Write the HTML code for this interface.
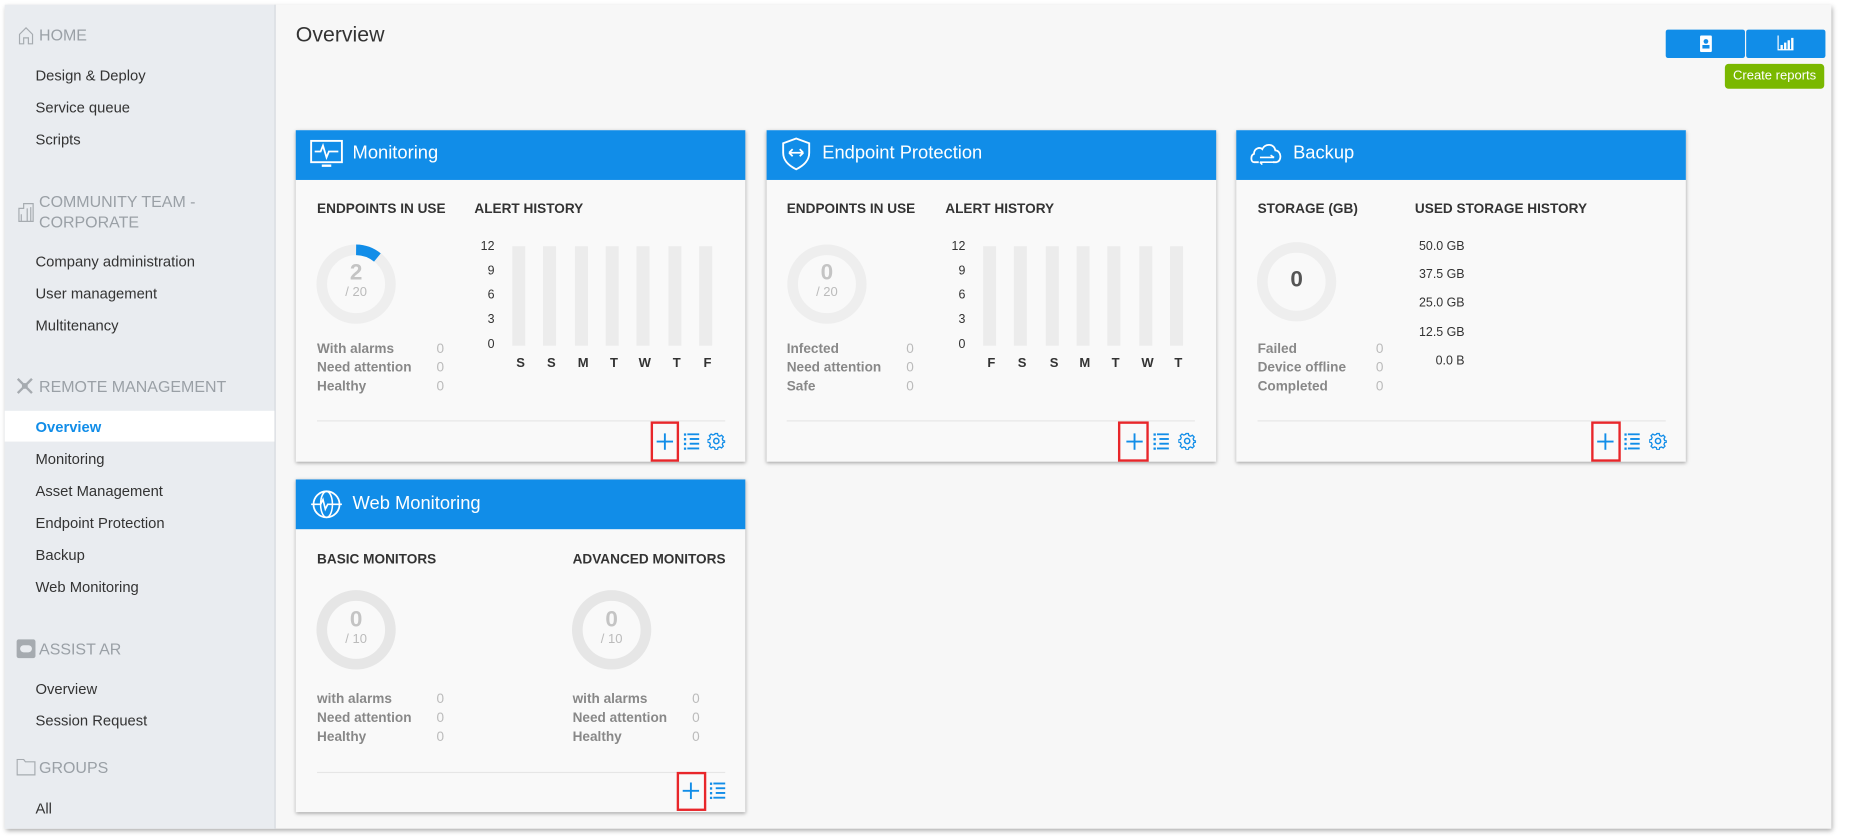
<!DOCTYPE html>
<html><head><meta charset="utf-8">
<style>
html,body{margin:0;padding:0;width:1855px;height:837px;overflow:hidden;background:#fff;font-family:"Liberation Sans",sans-serif;}
#s{position:absolute;left:0;top:0;width:1568px;height:707px;transform:scale(1.18304,1.18388);transform-origin:0 0;}
.a{position:absolute;white-space:nowrap;}
#frame{left:4px;top:4px;width:1544px;height:696px;background:#f7f7f7;box-shadow:1px 2px 4px rgba(0,0,0,.35);}
#side{left:4px;top:4px;width:228px;height:696px;background:#e9ecf0;border-right:1px solid #d6d9dd;}
.sh{font-size:13.5px;color:#9aa0a6;}
.si{font-size:12.5px;color:#333;left:30px;}
.card{background:#f9f9f9;box-shadow:0 1px 3px rgba(0,0,0,.35);}
.hd{background:#118de8;color:#fff;font-size:15.5px;}
.lab{font-size:11.5px;font-weight:bold;color:#333;}
.st{font-size:11.5px;font-weight:bold;color:#888;}
.sv{font-size:11.5px;color:#bbb;}
.yl{font-size:10.5px;color:#333;text-align:right;width:30px;}
.bar{background:#ececec;width:11px;height:84px;top:208px;}
.day{font-size:11px;font-weight:bold;color:#333;width:14px;text-align:center;top:301px;}
.div{height:1px;background:#e6e6e6;}
.red{border:2px solid #e8262a;box-sizing:border-box;}
</style></head><body><div id="s">
<div class="a" id="frame"></div>
<div class="a" id="side"></div>

<!-- sidebar -->
<svg class="a" style="left:15px;top:22px" width="14" height="16" viewBox="0 0 14 16"><path d="M1.5 15V7L7 1.5 12.5 7V15H9V10H5V15Z" fill="none" stroke="#a6abb0" stroke-width="1"/></svg>
<div class="a sh" style="left:33px;top:22px">HOME</div>
<div class="a si" style="top:57px">Design &amp; Deploy</div>
<div class="a si" style="top:84px">Service queue</div>
<div class="a si" style="top:111px">Scripts</div>
<svg class="a" style="left:15px;top:170px" width="14" height="18" viewBox="0 0 14 18"><path d="M1 17V6H5V2H13V17ZM3 17V11M8 6V17M11 5V17" fill="none" stroke="#a6abb0" stroke-width="1"/></svg>
<div class="a sh" style="left:33px;top:162px;line-height:17px">COMMUNITY TEAM -<br>CORPORATE</div>
<div class="a si" style="top:214px">Company administration</div>
<div class="a si" style="top:241px">User management</div>
<div class="a si" style="top:268px">Multitenancy</div>
<svg class="a" style="left:13px;top:318px" width="16" height="16" viewBox="0 0 16 16"><path d="M2 2L14 14M14 2L2 14" stroke="#a6abb0" stroke-width="2"/><circle cx="8" cy="8" r="2.5" fill="#a6abb0"/></svg>
<div class="a sh" style="left:33px;top:319px">REMOTE MANAGEMENT</div>
<div class="a" style="left:4px;top:347px;width:228px;height:26px;background:#fff"></div>
<div class="a si" style="top:354px;color:#118de8;font-weight:bold">Overview</div>
<div class="a si" style="top:381px">Monitoring</div>
<div class="a si" style="top:408px">Asset Management</div>
<div class="a si" style="top:435px">Endpoint Protection</div>
<div class="a si" style="top:462px">Backup</div>
<div class="a si" style="top:489px">Web Monitoring</div>
<svg class="a" style="left:14px;top:540px" width="16" height="16" viewBox="0 0 16 16"><rect x="0" y="0" width="16" height="16" rx="2" fill="#a6abb0"/><rect x="3" y="5" width="10" height="6" rx="3" fill="#e9ecf0"/></svg>
<div class="a sh" style="left:33px;top:541px">ASSIST AR</div>
<div class="a si" style="top:575px">Overview</div>
<div class="a si" style="top:602px">Session Request</div>
<svg class="a" style="left:14px;top:641px" width="16" height="14" viewBox="0 0 16 14"><path d="M.5 13.5V.5H6L7.5 2.5H15.5V13.5Z" fill="none" stroke="#a6abb0"/></svg>
<div class="a sh" style="left:33px;top:641px">GROUPS</div>
<div class="a si" style="top:676px">All</div>

<!-- header -->
<div class="a" style="left:250px;top:19px;font-size:18px;color:#333">Overview</div>
<div class="a" style="left:1408px;top:25px;width:67px;height:24px;background:#118de8;border-radius:2px"></div>
<div class="a" style="left:1476px;top:25px;width:67px;height:24px;background:#118de8;border-radius:2px"></div>
<svg class="a" style="left:1436px;top:30px" width="12" height="14" viewBox="0 0 12 14"><rect x="1" y="0" width="10" height="14" rx="1" fill="#fff"/><circle cx="6" cy="5" r="2" fill="#118de8"/><rect x="3" y="8" width="6" height="3" fill="#118de8"/></svg>
<svg class="a" style="left:1502px;top:30px" width="14" height="13" viewBox="0 0 14 13"><path d="M1 0V12H14" stroke="#fff" fill="none"/><rect x="3" y="8" width="2" height="4" fill="#fff"/><rect x="6" y="6" width="2" height="6" fill="#fff"/><rect x="9" y="4" width="2" height="8" fill="#fff"/><rect x="12" y="2" width="2" height="10" fill="#fff"/></svg>
<div class="a" style="left:1505px;top:50px;width:0;height:0;border:4px solid transparent;border-bottom-color:#7ab800"></div>
<div class="a" style="left:1458px;top:54px;width:84px;height:21px;background:#7ab800;border-radius:3px;color:#fff;font-size:11px;text-align:center;line-height:21px">Create reports</div>

<!-- Monitoring card -->
<div class="a card" style="left:250px;top:110px;width:380px;height:280px"></div>
<div class="a hd" style="left:250px;top:110px;width:380px;height:42px"></div>
<svg class="a" style="left:262px;top:117px" width="28" height="26" viewBox="0 0 28 26"><rect x="1" y="2" width="26" height="18" fill="none" stroke="#fff" stroke-width="1.6"/><path d="M4 11H9L11 6 14 16 16 11H24" fill="none" stroke="#fff" stroke-width="1.5"/><path d="M10 23H18" stroke="#fff" stroke-width="2"/></svg>
<div class="a hd" style="left:298px;top:121px;background:none">Monitoring</div>
<div class="a lab" style="left:268px;top:171px">ENDPOINTS IN USE</div>
<div class="a lab" style="left:401px;top:171px">ALERT HISTORY</div>
<svg class="a" style="left:264px;top:203px" width="74" height="74" viewBox="0 0 74 74"><circle cx="37" cy="37" r="29" fill="none" stroke="#eeeeee" stroke-width="9"/><path d="M37 8A29 29 0 0 1 55 14.5" fill="none" stroke="#118de8" stroke-width="9"/></svg>
<div class="a" style="left:280px;top:220px;width:42px;text-align:center;font-size:19px;font-weight:bold;color:#c4c4c4">2</div>
<div class="a" style="left:280px;top:241px;width:42px;text-align:center;font-size:11px;color:#bbb">/ 20</div>
<div class="a st" style="left:268px;top:289px">With alarms</div><div class="a sv" style="left:369px;top:289px">0</div>
<div class="a st" style="left:268px;top:305px">Need attention</div><div class="a sv" style="left:369px;top:305px">0</div>
<div class="a st" style="left:268px;top:321px">Healthy</div><div class="a sv" style="left:369px;top:321px">0</div>
<div class="a yl" style="left:388px;top:202px">12</div><div class="a yl" style="left:388px;top:223px">9</div><div class="a yl" style="left:388px;top:243px">6</div><div class="a yl" style="left:388px;top:264px">3</div><div class="a yl" style="left:388px;top:285px">0</div>
<div class="a bar" style="left:433px"></div><div class="a bar" style="left:459px"></div><div class="a bar" style="left:486px"></div><div class="a bar" style="left:512px"></div><div class="a bar" style="left:538px"></div><div class="a bar" style="left:565px"></div><div class="a bar" style="left:591px"></div>
<div class="a day" style="left:433px">S</div><div class="a day" style="left:459px">S</div><div class="a day" style="left:486px">M</div><div class="a day" style="left:512px">T</div><div class="a day" style="left:538px">W</div><div class="a day" style="left:565px">T</div><div class="a day" style="left:591px">F</div>
<div class="a div" style="left:268px;top:355px;width:345px"></div>

<!-- Endpoint card -->
<div class="a card" style="left:648px;top:110px;width:380px;height:280px"></div>
<div class="a hd" style="left:648px;top:110px;width:380px;height:42px"></div>
<svg class="a" style="left:660px;top:116px" width="26" height="28" viewBox="0 0 26 28"><path d="M13 1L24 5V13C24 20 19 24 13 27 7 24 2 20 2 13V5Z" fill="none" stroke="#fff" stroke-width="1.6"/><path d="M7 13H19M7 13L10 10M7 13L10 16M19 13L16 10M19 13L16 16" stroke="#fff" stroke-width="1.5" fill="none"/></svg>
<div class="a hd" style="left:695px;top:121px;background:none">Endpoint Protection</div>
<div class="a lab" style="left:665px;top:171px">ENDPOINTS IN USE</div>
<div class="a lab" style="left:799px;top:171px">ALERT HISTORY</div>
<svg class="a" style="left:662px;top:203px" width="74" height="74" viewBox="0 0 74 74"><circle cx="37" cy="37" r="29" fill="none" stroke="#eeeeee" stroke-width="9"/></svg>
<div class="a" style="left:678px;top:220px;width:42px;text-align:center;font-size:19px;font-weight:bold;color:#c4c4c4">0</div>
<div class="a" style="left:678px;top:241px;width:42px;text-align:center;font-size:11px;color:#bbb">/ 20</div>
<div class="a st" style="left:665px;top:289px">Infected</div><div class="a sv" style="left:766px;top:289px">0</div>
<div class="a st" style="left:665px;top:305px">Need attention</div><div class="a sv" style="left:766px;top:305px">0</div>
<div class="a st" style="left:665px;top:321px">Safe</div><div class="a sv" style="left:766px;top:321px">0</div>
<div class="a yl" style="left:786px;top:202px">12</div><div class="a yl" style="left:786px;top:223px">9</div><div class="a yl" style="left:786px;top:243px">6</div><div class="a yl" style="left:786px;top:264px">3</div><div class="a yl" style="left:786px;top:285px">0</div>
<div class="a bar" style="left:831px"></div><div class="a bar" style="left:857px"></div><div class="a bar" style="left:884px"></div><div class="a bar" style="left:910px"></div><div class="a bar" style="left:936px"></div><div class="a bar" style="left:963px"></div><div class="a bar" style="left:989px"></div>
<div class="a day" style="left:831px">F</div><div class="a day" style="left:857px">S</div><div class="a day" style="left:884px">S</div><div class="a day" style="left:910px">M</div><div class="a day" style="left:936px">T</div><div class="a day" style="left:963px">W</div><div class="a day" style="left:989px">T</div>
<div class="a div" style="left:665px;top:355px;width:345px"></div>

<!-- Backup card -->
<div class="a card" style="left:1045px;top:110px;width:380px;height:280px"></div>
<div class="a hd" style="left:1045px;top:110px;width:380px;height:42px"></div>
<svg class="a" style="left:1056px;top:119px" width="30" height="22" viewBox="0 0 30 22"><path d="M8 18H4C1 18 1 12 4 11 4 6 9 5 11 7 13 2 21 2 22 8 27 8 28 17 23 18H20" fill="none" stroke="#fff" stroke-width="1.5"/><path d="M9 14H21M9 18H21M18 12L21 14M11 20L9 18" stroke="#fff" stroke-width="1.3" fill="none"/></svg>
<div class="a hd" style="left:1093px;top:121px;background:none">Backup</div>
<div class="a lab" style="left:1063px;top:171px">STORAGE (GB)</div>
<div class="a lab" style="left:1196px;top:171px">USED STORAGE HISTORY</div>
<svg class="a" style="left:1059px;top:201px" width="74" height="74" viewBox="0 0 74 74"><circle cx="37" cy="37" r="29" fill="none" stroke="#eeeeee" stroke-width="9"/></svg>
<div class="a" style="left:1075px;top:226px;width:42px;text-align:center;font-size:19px;font-weight:bold;color:#555">0</div>
<div class="a st" style="left:1063px;top:289px">Failed</div><div class="a sv" style="left:1163px;top:289px">0</div>
<div class="a st" style="left:1063px;top:305px">Device offline</div><div class="a sv" style="left:1163px;top:305px">0</div>
<div class="a st" style="left:1063px;top:321px">Completed</div><div class="a sv" style="left:1163px;top:321px">0</div>
<div class="a yl" style="left:1188px;top:202px;width:50px">50.0 GB</div>
<div class="a yl" style="left:1188px;top:226px;width:50px">37.5 GB</div>
<div class="a yl" style="left:1188px;top:250px;width:50px">25.0 GB</div>
<div class="a yl" style="left:1188px;top:275px;width:50px">12.5 GB</div>
<div class="a yl" style="left:1188px;top:299px;width:50px">0.0 B</div>
<div class="a div" style="left:1063px;top:355px;width:345px"></div>

<!-- Web Monitoring card -->
<div class="a card" style="left:250px;top:405px;width:380px;height:281px"></div>
<div class="a hd" style="left:250px;top:405px;width:380px;height:42px"></div>
<svg class="a" style="left:262px;top:413px" width="28" height="26" viewBox="0 0 28 26"><circle cx="14" cy="13" r="11" fill="none" stroke="#fff" stroke-width="1.5"/><ellipse cx="14" cy="13" rx="5" ry="11" fill="none" stroke="#fff" stroke-width="1.3"/><path d="M1 13H9L11 9 13 17 15 13H27" fill="none" stroke="#fff" stroke-width="1.4"/></svg>
<div class="a hd" style="left:298px;top:417px;background:none">Web Monitoring</div>
<div class="a lab" style="left:268px;top:467px">BASIC MONITORS</div>
<div class="a lab" style="left:484px;top:467px">ADVANCED MONITORS</div>
<svg class="a" style="left:264px;top:495px" width="74" height="74" viewBox="0 0 74 74"><circle cx="37" cy="37" r="29" fill="none" stroke="#e6e6e6" stroke-width="9"/></svg>
<svg class="a" style="left:480px;top:495px" width="74" height="74" viewBox="0 0 74 74"><circle cx="37" cy="37" r="29" fill="none" stroke="#e6e6e6" stroke-width="9"/></svg>
<div class="a" style="left:280px;top:513px;width:42px;text-align:center;font-size:19px;font-weight:bold;color:#c4c4c4">0</div>
<div class="a" style="left:280px;top:534px;width:42px;text-align:center;font-size:11px;color:#bbb">/ 10</div>
<div class="a" style="left:496px;top:513px;width:42px;text-align:center;font-size:19px;font-weight:bold;color:#c4c4c4">0</div>
<div class="a" style="left:496px;top:534px;width:42px;text-align:center;font-size:11px;color:#bbb">/ 10</div>
<div class="a st" style="left:268px;top:585px">with alarms</div><div class="a sv" style="left:369px;top:585px">0</div>
<div class="a st" style="left:268px;top:601px">Need attention</div><div class="a sv" style="left:369px;top:601px">0</div>
<div class="a st" style="left:268px;top:617px">Healthy</div><div class="a sv" style="left:369px;top:617px">0</div>
<div class="a st" style="left:484px;top:585px">with alarms</div><div class="a sv" style="left:585px;top:585px">0</div>
<div class="a st" style="left:484px;top:601px">Need attention</div><div class="a sv" style="left:585px;top:601px">0</div>
<div class="a st" style="left:484px;top:617px">Healthy</div><div class="a sv" style="left:585px;top:617px">0</div>
<div class="a div" style="left:268px;top:652px;width:345px"></div>

<!-- footer icons -->
<svg width="0" height="0" style="position:absolute"><defs>
<g id="plus"><path d="M7 0V14M0 7H14" stroke="#118de8" stroke-width="1.6"/></g>
<g id="list" fill="#118de8"><rect x="0" y="0" width="2" height="2"/><rect x="0" y="4" width="2" height="2"/><rect x="0" y="8" width="2" height="2"/><rect x="0" y="12" width="2" height="2"/><rect x="3" y="0" width="10" height="1.6"/><rect x="5" y="4" width="8" height="1.6"/><rect x="5" y="8" width="8" height="1.6"/><rect x="3" y="12" width="10" height="1.6"/></g>
<g id="gear"><circle cx="7" cy="7" r="2.2" fill="none" stroke="#118de8" stroke-width="1.3"/><path d="M6 0.7H8L8.4 2.4 9.9 3 11.4 2.1 12.9 3.6 12 5.1 12.6 6.6 14.3 7 14.3 8 12.6 8.4 12 9.9 12.9 11.4 11.4 12.9 9.9 12 8.4 12.6 8 14.3H6L5.6 12.6 4.1 12 2.6 12.9 1.1 11.4 2 9.9 1.4 8.4 -0.3 8 -0.3 6 1.4 5.6 2 4.1 1.1 2.6 2.6 1.1 4.1 2 5.6 1.4Z" fill="none" stroke="#118de8" stroke-width="1.1"/></g>
</defs></svg>

<div class="a red" style="left:550px;top:356px;width:24px;height:34px"></div>
<svg class="a" style="left:555px;top:366px" width="14" height="14"><use href="#plus"/></svg>
<svg class="a" style="left:578px;top:366px" width="14" height="14"><use href="#list"/></svg>
<svg class="a" style="left:598px;top:365px" width="15" height="15" viewBox="-0.5 -0.5 15 15"><use href="#gear"/></svg>

<div class="a red" style="left:945px;top:356px;width:26px;height:34px"></div>
<svg class="a" style="left:952px;top:366px" width="14" height="14"><use href="#plus"/></svg>
<svg class="a" style="left:975px;top:366px" width="14" height="14"><use href="#list"/></svg>
<svg class="a" style="left:996px;top:365px" width="15" height="15" viewBox="-0.5 -0.5 15 15"><use href="#gear"/></svg>

<div class="a red" style="left:1345px;top:356px;width:25px;height:34px"></div>
<svg class="a" style="left:1350px;top:366px" width="14" height="14"><use href="#plus"/></svg>
<svg class="a" style="left:1373px;top:366px" width="14" height="14"><use href="#list"/></svg>
<svg class="a" style="left:1394px;top:365px" width="15" height="15" viewBox="-0.5 -0.5 15 15"><use href="#gear"/></svg>

<div class="a red" style="left:572px;top:652px;width:25px;height:33px"></div>
<svg class="a" style="left:577px;top:661px" width="14" height="14"><use href="#plus"/></svg>
<svg class="a" style="left:600px;top:661px" width="14" height="14"><use href="#list"/></svg>
</div></body></html>
